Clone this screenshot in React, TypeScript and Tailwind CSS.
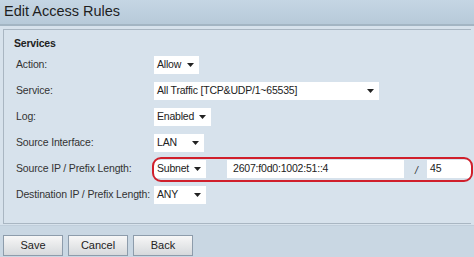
import { ReactNode } from 'react'

function Arrow() {
  return (
    <svg width="7" height="4" viewBox="0 0 7 4" className="shrink-0">
      <path d="M0 0 H7 L3.5 4 Z" fill="#222" />
    </svg>
  )
}

function Select({ value, width }: { value: string; width: string }) {
  return (
    <div className={`flex h-[18px] shrink-0 items-center justify-between whitespace-nowrap bg-white pl-[3px] pr-[5px] text-[10.5px] tracking-[-0.2px] text-[#222] ${width}`}>
      <span>{value}</span>
      <Arrow />
    </div>
  )
}

function Row({ label, children }: { label: string; children: ReactNode }) {
  return (
    <div className="relative flex h-[26px] items-center">
      <div className="w-[140px] shrink-0 whitespace-nowrap pl-[2px] text-[10.5px] tracking-[-0.15px] text-[#333]">{label}</div>
      {children}
    </div>
  )
}

export default function App() {
  return (
    <div className="flex h-[257px] w-[474px] flex-col overflow-hidden bg-[#d7e2ec] font-['Liberation_Sans',Arial,sans-serif]">
      {/* Page title */}
      <div className="h-[26px] shrink-0 border-b-2 border-[#a3b5c3] bg-gradient-to-b from-[#c5d6e4] to-[#b7cad9] pl-[4px] text-[14.5px] leading-[23px] text-[#1e1e1e]">
        Edit Access Rules
      </div>

      {/* Services fieldset */}
      <div className="px-[3px] pt-[3px]">
        <div className="h-[195px] border border-r-0 border-[#a9b6c2] pl-[10px] pt-[5px]">
          <div className="h-[17px] text-[10.5px] font-bold leading-[16px] tracking-[-0.2px] text-[#222]">Services</div>
          <Row label="Action:">
            <Select value="Allow" width="w-[45px]" />
          </Row>
          <Row label="Service:">
            <Select value="All Traffic [TCP&UDP/1~65535]" width="w-[225px]" />
          </Row>
          <Row label="Log:">
            <Select value="Enabled" width="w-[57px]" />
          </Row>
          <Row label="Source Interface:">
            <Select value="LAN" width="w-[50px]" />
          </Row>
          <Row label="Source IP / Prefix Length:">
            <Select value="Subnet" width="w-[52px]" />
            <div className="ml-[21px] flex h-[18px] w-[177px] shrink-0 items-center bg-white pl-[6px] text-[10.5px] tracking-[-0.2px] text-[#222]">
              2607:f0d0:1002:51::4
            </div>
            <div className="w-[23px] shrink-0 pl-[2px] pt-[4px] text-center text-[10.5px] italic text-[#333]">/</div>
            <div className="flex h-[18px] w-[44px] shrink-0 items-center bg-white pl-[3px] text-[10.5px] text-[#222]">45</div>
            <div className="pointer-events-none absolute left-[138px] top-[1px] h-[25px] w-[321px] rounded-[9px] border-2 border-[#d01f2b]" />
          </Row>
          <Row label="Destination IP / Prefix Length:">
            <Select value="ANY" width="w-[52px]" />
          </Row>
        </div>
      </div>

      {/* Buttons */}
      <div className="mt-[1px] flex flex-1 items-start gap-[5px] border-t border-[#c0cedb] bg-[#c9d7e3] pl-[3px] pt-[9px]">
        {['Save', 'Cancel', 'Back'].map(b => (
          <button
            key={b}
            className="h-[21px] w-[60px] border border-[#8d9cab] bg-gradient-to-b from-[#f7f7f7] to-[#d6d9dc] text-[11px] text-[#222]"
          >
            {b}
          </button>
        ))}
      </div>
    </div>
  )
}
